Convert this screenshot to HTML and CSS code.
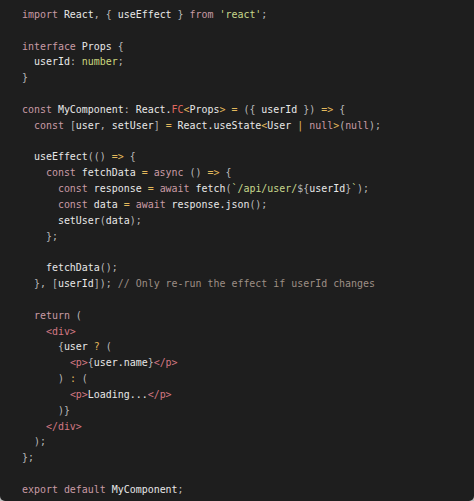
FILE: index.html
```html
<!DOCTYPE html>
<html>
<head>
<meta charset="utf-8">
<link rel="stylesheet" href="styles.css">
</head>
<body>
<div class="editor"><pre class="code"><span class="k">import</span> React<span class="p">,</span> <span class="p">{</span> useEffect <span class="p">}</span> <span class="k">from</span> <span class="s">'react'</span><span class="p">;</span>

<span class="k">interface</span> Props <span class="p">{</span>
  userId<span class="p">:</span> <span class="t">number</span><span class="p">;</span>
<span class="p">}</span>

<span class="k">const</span> MyComponent<span class="p">:</span> React.<span class="r">FC</span><span class="o">&lt;</span>Props<span class="o">&gt;</span> <span class="o">=</span> <span class="p">({</span> userId <span class="p">})</span> <span class="o">=&gt;</span> <span class="p">{</span>
  <span class="k">const</span> <span class="p">[</span>user<span class="p">,</span> setUser<span class="p">]</span> <span class="o">=</span> React.useState<span class="o">&lt;</span>User <span class="o">|</span> <span class="k">null</span><span class="o">&gt;</span><span class="p">(</span><span class="k">null</span><span class="p">);</span>

  useEffect<span class="p">(()</span> <span class="o">=&gt;</span> <span class="p">{</span>
    <span class="k">const</span> fetchData <span class="o">=</span> <span class="k">async</span> <span class="p">()</span> <span class="o">=&gt;</span> <span class="p">{</span>
      <span class="k">const</span> response <span class="o">=</span> <span class="k">await</span> fetch<span class="p">(</span><span class="s">`/api/user/</span><span class="p">${</span>userId<span class="p">}</span><span class="s">`</span><span class="p">);</span>
      <span class="k">const</span> data <span class="o">=</span> <span class="k">await</span> response.json<span class="p">();</span>
      setUser<span class="p">(</span>data<span class="p">);</span>
    <span class="p">};</span>

    fetchData<span class="p">();</span>
  <span class="p">},</span> <span class="p">[</span>userId<span class="p">]);</span> <span class="c">// Only re-run the effect if userId changes</span>

  <span class="k">return</span> <span class="p">(</span>
    <span class="j">&lt;div&gt;</span>
      <span class="p">{</span>user <span class="o">?</span> <span class="p">(</span>
        <span class="j">&lt;p&gt;</span><span class="p">{</span>user.name<span class="p">}</span><span class="j">&lt;/p&gt;</span>
      <span class="p">)</span> <span class="o">:</span> <span class="p">(</span>
        <span class="j">&lt;p&gt;</span>Loading...<span class="j">&lt;/p&gt;</span>
      <span class="p">)}</span>
    <span class="j">&lt;/div&gt;</span>
  <span class="p">);</span>
<span class="p">};</span>

<span class="k">export</span> <span class="k">default</span> MyComponent<span class="p">;</span></pre></div>
</body>
</html>
```
FILE: styles.css
```css
html, body {
  margin: 0;
  padding: 0;
  background: #bdbdbd;
}

.editor {
  width: 474px;
  height: 501px;
  box-sizing: border-box;
  background: #1e1e1e;
  border-radius: 0 0 5px 5px;
  padding: 7px 0 0 22px;
  overflow: hidden;
}

.code {
  margin: 0;
  font-family: "DejaVu Sans Mono", "Liberation Mono", monospace;
  font-size: 9.95px;
  line-height: 15.83px;
  color: #e8e8e8;
}

.k { color: #c99ba5; }
.p { color: #b9b9b9; }
.o { color: #e3b95c; }
.s { color: #c8d88c; }
.t { color: #cdd97e; }
.r { color: #e0695e; }
.c { color: #9d8e85; }
.j { color: #d37883; }
```
